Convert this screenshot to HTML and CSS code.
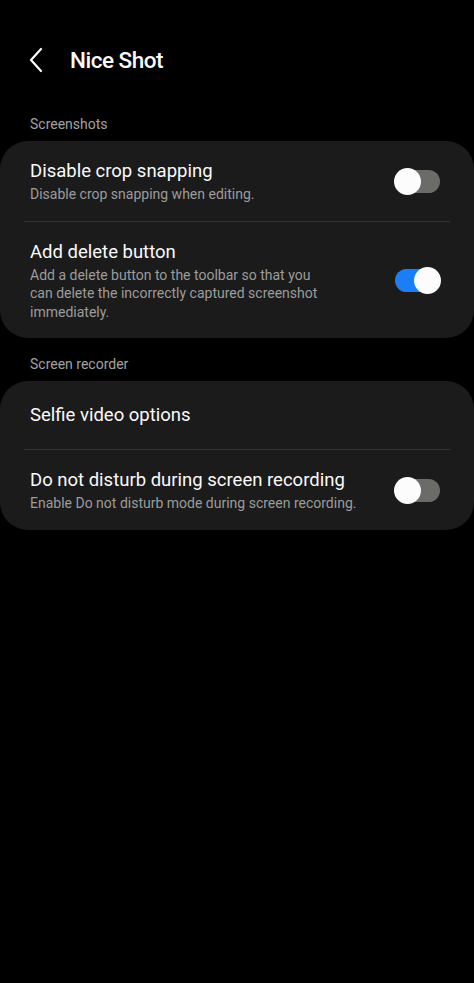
FILE: index.html
```html
<!DOCTYPE html>
<html lang="en">
<head>
    <meta charset="UTF-8">
    <meta name="viewport" content="width=device-width, initial-scale=1.0">
    <title>Nice Shot</title>
    <link rel="stylesheet" href="styles.css">
</head>
<body>
    <div class="header">
        <button class="back" aria-label="Back">
            <svg width="16" height="26" viewBox="0 0 16 26">
                <path d="M13 2 L3 13 L13 24" fill="none" stroke="#fff" stroke-width="2.2" stroke-linecap="round" stroke-linejoin="round"/>
            </svg>
        </button>
        <h1>Nice Shot</h1>
    </div>

    <div class="section-label">Screenshots</div>
    <div class="card">
        <div class="row">
            <div class="text">
                <div class="title">Disable crop snapping</div>
                <div class="sub">Disable crop snapping when editing.</div>
            </div>
            <div class="switch"></div>
        </div>
        <div class="divider"></div>
        <div class="row">
            <div class="text">
                <div class="title">Add delete button</div>
                <div class="sub">Add a delete button to the toolbar so that you<br>can delete the incorrectly captured screenshot immediately.</div>
            </div>
            <div class="switch on"></div>
        </div>
    </div>

    <div class="section-label second">Screen recorder</div>
    <div class="card">
        <div class="row plain">
            <div class="text">
                <div class="title">Selfie video options</div>
            </div>
        </div>
        <div class="divider"></div>
        <div class="row">
            <div class="text">
                <div class="title">Do not disturb during screen recording</div>
                <div class="sub">Enable Do not disturb mode during screen recording.</div>
            </div>
            <div class="switch"></div>
        </div>
    </div>
</body>
</html>
```

FILE: styles.css
```css
body {
    margin: 0;
    background-color: #000;
    color: #fafafa;
    font-family: Roboto, "Noto Sans", sans-serif;
}
.header {
    display: flex;
    align-items: center;
    height: 40px;
    padding: 40px 0 0 28px;
}
.back {
    background: none;
    border: none;
    padding: 0;
    width: 42px;
    height: 26px;
    display: flex;
    align-items: center;
}
.header h1 {
    margin: 0;
    font-size: 22.5px;
    font-weight: 500;
    letter-spacing: -0.5px;
}
.section-label {
    padding: 35px 30px 8px;
    font-size: 14px;
    line-height: 18px;
    color: #a3a3a3;
}
.section-label.second {
    padding-top: 17px;
}
.card {
    background-color: #1b1b1b;
    border-radius: 28px;
}
.row {
    display: flex;
    align-items: center;
    padding: 18px 34px 17px 30px;
}
.row.plain {
    padding-top: 22px;
    padding-bottom: 22px;
}
.text {
    flex: 1;
    padding-right: 20px;
}
.title {
    font-size: 18.5px;
    line-height: 24px;
}
.sub {
    margin-top: 2px;
    font-size: 14px;
    line-height: 18.5px;
    color: #9c9c9c;
}
.divider {
    height: 1px;
    margin: 0 24px;
    background-color: #333;
}
.switch {
    position: relative;
    flex: none;
    width: 45px;
    height: 23px;
    border-radius: 12px;
    background-color: #6b6b68;
}
.switch::after {
    content: "";
    position: absolute;
    top: -2px;
    left: -1px;
    width: 27px;
    height: 27px;
    border-radius: 50%;
    background-color: #fcfcfc;
}
.switch.on {
    background-color: #1a7ff6;
}
.switch.on::after {
    left: auto;
    right: -1px;
}
```
